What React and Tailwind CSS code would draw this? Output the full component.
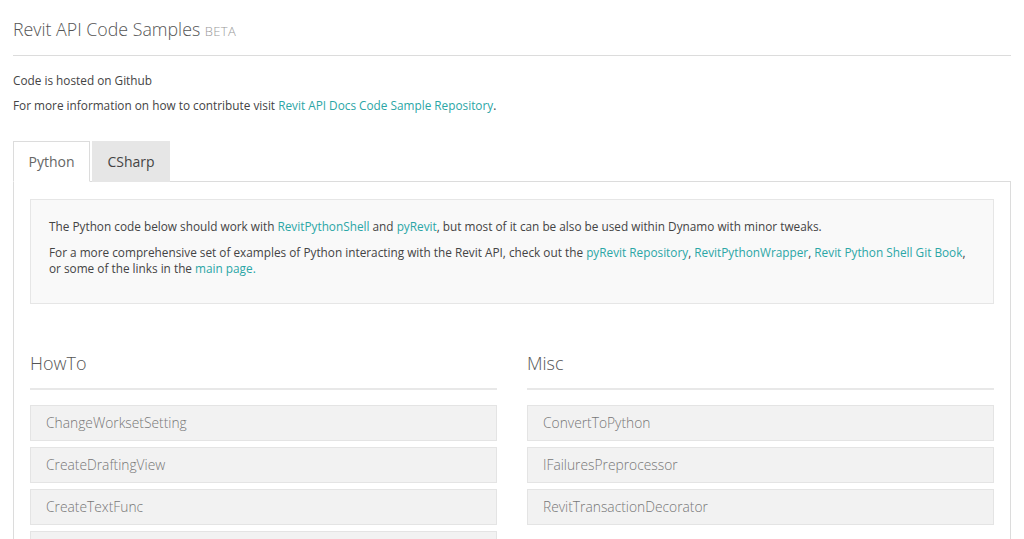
const link = 'text-[#2ba6a6]';

function SampleList({ title, items }) {
  return (
    <div>
      <h3 className="text-[18px] font-light leading-[24px] text-[#555] pb-[13px] border-b-2 border-[#e8e8e8]">{title}</h3>
      <div className="mt-[15px] flex flex-col gap-[6px]">
        {items.map((item) => (
          <div
            key={item}
            className="h-[36px] flex items-center px-[15px] bg-[#f2f2f2] border border-[#e4e4e4] text-[13.8px] font-light text-[#777]"
          >
            {item}
          </div>
        ))}
      </div>
    </div>
  );
}

export default function App() {
  return (
    <div className="w-[1024px] h-[539px] overflow-hidden bg-white px-[13px] font-['Open_Sans',sans-serif] text-[#444]">
      <h1 className="pt-[17px] pb-[12px] border-b border-[#dcdcdc] text-[17.8px] leading-[24px] font-light text-[#555]">
        Revit API Code Samples <span className="text-[13px] text-[#999] tracking-wide">BETA</span>
      </h1>

      <p className="mt-[15px] text-[11.8px] leading-[18px]">Code is hosted on Github</p>
      <p className="mt-[7px] text-[11.8px] leading-[18px]">
        For more information on how to contribute visit <span className={link}>Revit API Docs Code Sample Repository</span>.
      </p>

      <div className="mt-[27px] flex gap-[2px] h-[41px]">
        <div className="w-[77px] bg-white border border-[#dcdcdc] border-b-white text-[14px] text-[#666] flex items-center justify-center relative z-10">
          Python
        </div>
        <div className="w-[78px] bg-[#e6e6e6] text-[14px] text-[#444] flex items-center justify-center">
          CSharp
        </div>
      </div>

      <div className="-mt-px border border-[#dcdcdc] px-[16px] pt-[17px] pb-8">
        <div className="bg-[#f9f9f9] border border-[#e6e6e6] px-[18px] pt-[18px] pb-[27px] text-[11.8px] leading-[16px] text-[#444]">
          <p>
            The Python code below should work with <span className={link}>RevitPythonShell</span> and{' '}
            <span className={link}>pyRevit</span>, but most of it can be also be used within Dynamo with minor tweaks.
          </p>
          <p className="mt-[10px]">
            For a more comprehensive set of examples of Python interacting with the Revit API, check out the{' '}
            <span className={link}>pyRevit Repository</span>, <span className={link}>RevitPythonWrapper</span>,{' '}
            <span className={link}>Revit Python Shell Git Book</span>, or some of the links in the{' '}
            <span className={link}>main page.</span>
          </p>
        </div>

        <div className="mt-[47px] grid grid-cols-2 gap-[30px]">
          <SampleList
            title="HowTo"
            items={['ChangeWorksetSetting', 'CreateDraftingView', 'CreateTextFunc', 'CreateWorkset']}
          />
          <SampleList
            title="Misc"
            items={['ConvertToPython', 'IFailuresPreprocessor', 'RevitTransactionDecorator']}
          />
        </div>
      </div>
    </div>
  );
}
